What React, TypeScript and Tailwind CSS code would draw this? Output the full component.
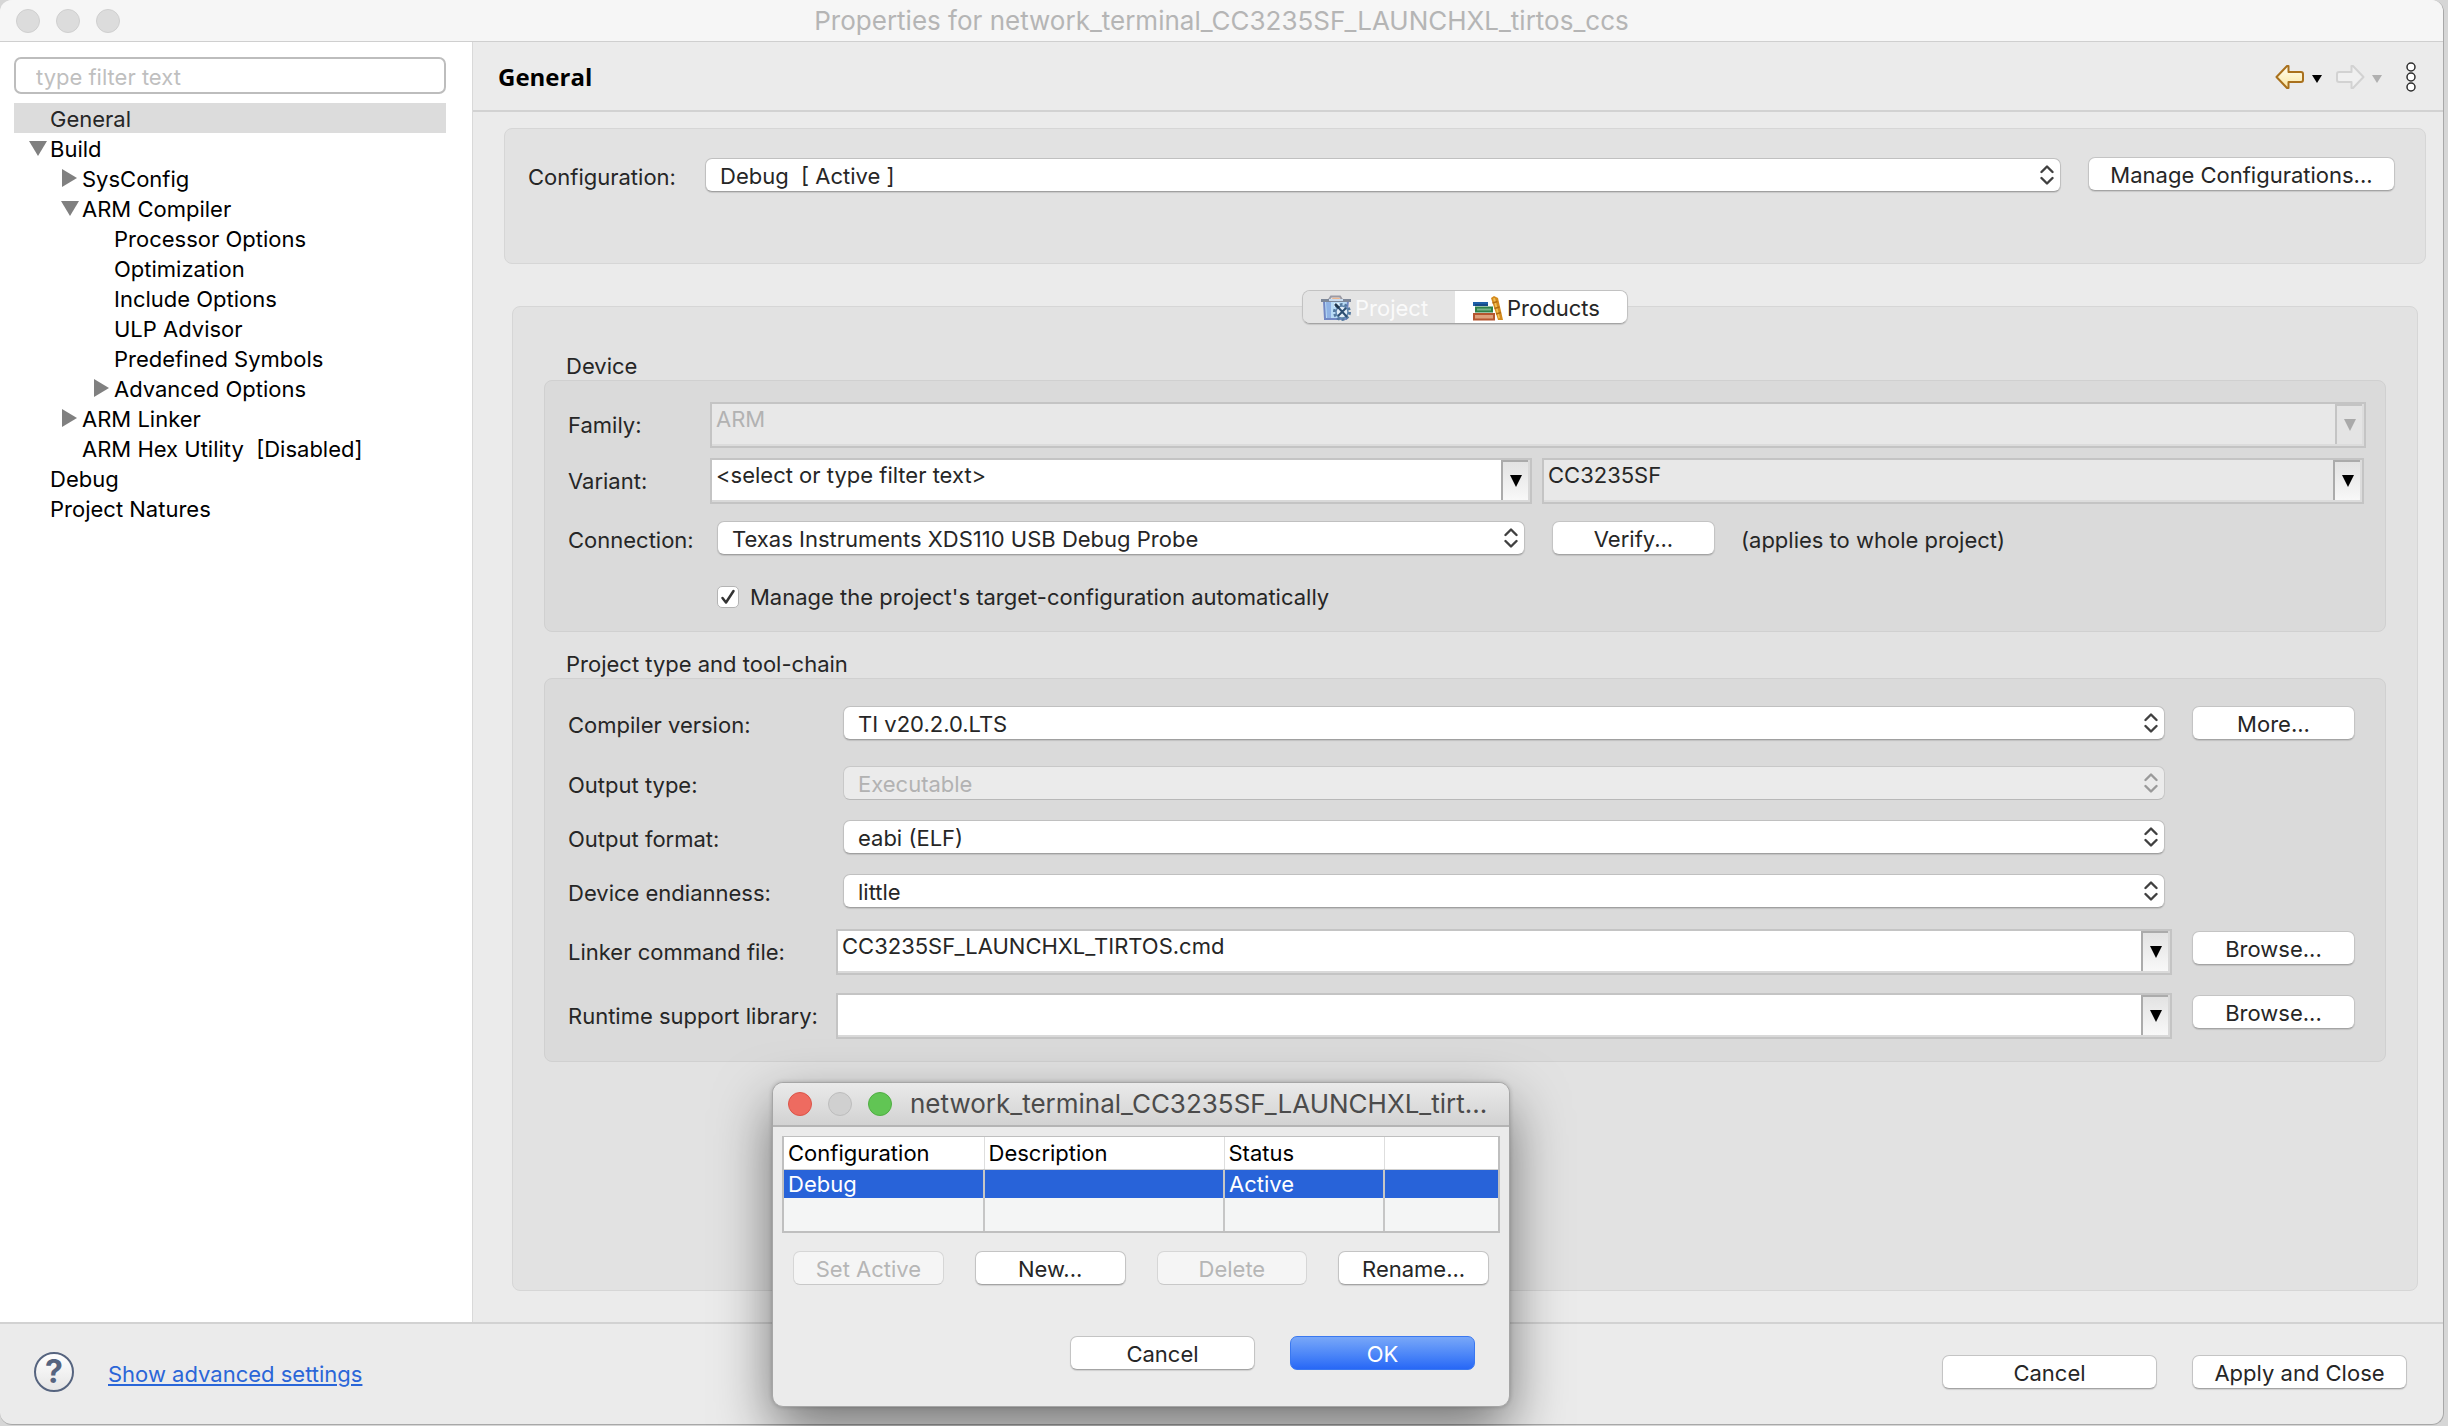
import { useState } from 'react'
import type { ReactNode } from 'react'
import clsx from 'clsx'

type TreeItem = {
  label: string
  depth: 0 | 1 | 2
  arrow?: 'open' | 'closed'
}

const tree: TreeItem[] = [
  { label: 'General', depth: 0 },
  { label: 'Build', depth: 0, arrow: 'open' },
  { label: 'SysConfig', depth: 1, arrow: 'closed' },
  { label: 'ARM Compiler', depth: 1, arrow: 'open' },
  { label: 'Processor Options', depth: 2 },
  { label: 'Optimization', depth: 2 },
  { label: 'Include Options', depth: 2 },
  { label: 'ULP Advisor', depth: 2 },
  { label: 'Predefined Symbols', depth: 2 },
  { label: 'Advanced Options', depth: 2, arrow: 'closed' },
  { label: 'ARM Linker', depth: 1, arrow: 'closed' },
  { label: 'ARM Hex Utility\u00a0 [Disabled]', depth: 1 },
  { label: 'Debug', depth: 0 },
  { label: 'Project Natures', depth: 0 },
]

const indent = { 0: 'pl-[14px]', 1: 'pl-[46px]', 2: 'pl-[78px]' }

function TreeArrow({ kind }: { kind?: 'open' | 'closed' }) {
  return (
    <span className="flex w-[22px] shrink-0 items-center">
      {kind === 'open' && (
        <svg width="18" height="15" viewBox="0 0 18 15" className="ml-px">
          <path d="M0 0h18L9 15z" fill="#808080" />
        </svg>
      )}
      {kind === 'closed' && (
        <svg width="15" height="18" viewBox="0 0 15 18" className="ml-[2px]">
          <path d="M0 0v18l15-9z" fill="#808080" />
        </svg>
      )}
    </span>
  )
}

type ButtonProps = {
  children: ReactNode
  className?: string
  disabled?: boolean
  primary?: boolean
}

function PushButton({ children, className, disabled, primary }: ButtonProps) {
  return (
    <button
      type="button"
      disabled={disabled}
      className={clsx(
        'flex h-[34px] shrink-0 items-center justify-center rounded-[7px] border pt-[2px] whitespace-nowrap',
        primary && 'border-[#3a78f0] bg-linear-to-b from-[#78a7f8] to-[#2767f6] text-white',
        disabled && 'border-[#d6d6d6] border-b-[#c8c8c8] bg-[#f5f5f5] text-[#b6b6b6]',
        !primary && !disabled && 'border-[#c4c4c4] border-b-[#a4a4a4] bg-white text-[#262626] shadow-[0_1px_1px_rgba(0,0,0,0.12)]',
        className
      )}
    >
      {children}
    </button>
  )
}

type PopUpProps = { id: string; value: string; className?: string; disabled?: boolean }

function PopUp({ id, value, className, disabled }: PopUpProps) {
  return (
    <div className={clsx('relative h-[34px]', className)}>
      <select
        id={id}
        disabled={disabled}
        className={clsx(
          'h-full w-full appearance-none rounded-[7px] border pt-[2px] pl-[14px] opacity-100',
          disabled
            ? 'border-[#c8c8c8] border-b-[#b8b8b8] bg-[#ebebeb] text-[#b2b2b2]'
            : 'border-[#c0c0c0] border-b-[#a0a0a0] bg-white text-[#262626] shadow-[0_1px_1px_rgba(0,0,0,0.12)]'
        )}
      >
        <option>{value}</option>
      </select>
      <svg
        width="14"
        height="20"
        viewBox="0 0 14 20"
        fill="none"
        stroke={disabled ? '#9a9a9a' : '#404040'}
        strokeWidth="2.4"
        strokeLinecap="round"
        strokeLinejoin="round"
        className="pointer-events-none absolute top-[7px] right-[7px]"
      >
        <path d="M1.500 7 7 1.500 12.500 7M1.500 13 7 18.500 12.500 13" />
      </svg>
    </div>
  )
}

type ComboProps = {
  id: string
  value: string
  label?: string
  className?: string
  tone?: 'white' | 'grey' | 'disabled'
}

// text field with a drop-down arrow at the right edge
function Combo({ id, value, label, className, tone = 'white' }: ComboProps) {
  const off = tone === 'disabled'
  return (
    <div
      className={clsx(
        'flex h-[46px] min-w-0 border-2 border-[#c4c4c4] pr-[2px] pb-[2px]',
        tone === 'white' ? 'bg-[#d9d9d9]' : 'bg-[#dcdcdc]',
        className
      )}
    >
      <input
        id={id}
        type="text"
        defaultValue={value}
        disabled={off}
        aria-label={label}
        className={clsx(
          'min-w-0 flex-1 pb-[10px] pl-[4px] outline-none',
          tone === 'white' ? 'bg-white' : 'bg-[#e8e8e8]',
          off ? 'text-[#b2b2b2]' : 'text-[#262626]'
        )}
      />
      <button
        type="button"
        disabled={off}
        aria-label="Show choices"
        className={clsx(
          'flex w-[27px] items-center justify-center border-t-2 border-l-2',
          off ? 'border-[#c4c4c4] bg-[#e4e4e4]' : 'border-[#ababab] bg-linear-to-b from-[#e3e3e3] to-[#f8f8f8]'
        )}
      >
        <svg width="12" height="12" viewBox="0 0 12 12">
          <path d="M0 0h12L6 12z" fill={off ? '#a9a9a9' : '#000'} />
        </svg>
      </button>
    </div>
  )
}

function ProjectIcon() {
  return (
    <svg width="30" height="26" viewBox="0 0 30 26">
      <path d="M8 4.500 10 1.500h9l2 3" fill="none" stroke="#9a9aa4" strokeWidth="2" />
      <path d="M10 4.500 12 2.800h6l2 1.700z" fill="#efb78f" />
      <path d="M3 6h24l-2 18H4z" fill="#b9dbf5" stroke="#7288c4" strokeWidth="2" />
      <path d="M5 7h5v16H6z" fill="#8fb2e4" />
      <path d="M0 4h30v3H0z" fill="#7d8798" />
      <path d="M8 4h14v2H8z" fill="#c9dbee" />
      <path d="M13 8h8v4h-8z" fill="#e2f4ff" />
      <circle cx="21" cy="17" r="7.500" fill="none" stroke="#54799f" strokeWidth="3" strokeDasharray="2.700 2" />
      <circle cx="21" cy="17" r="6" fill="#e3eef8" stroke="#5f86ae" strokeWidth="1.500" />
      <path d="m16 11 10 11M25 13l-8 8" stroke="#2e4f72" strokeWidth="2" />
      <path d="m14 9 4 4" stroke="#22384f" strokeWidth="2.500" />
    </svg>
  )
}

function BooksIcon() {
  return (
    <svg width="30" height="25" viewBox="0 0 30 25">
      <path d="M0 6h15v4H0z" fill="#1d5fa8" />
      <path d="M2 8h13v2H2z" fill="#174a86" />
      <path d="M2 10.500h18v6H2z" fill="#2f8148" />
      <path d="M4 12.500h14v2H4z" fill="#79b489" />
      <path d="M0 17h22v7.500H0z" fill="#b5552f" />
      <path d="M2 19h18v3.500H2z" fill="#dda07a" />
      <path d="M18 2l3-2 4 2 5 22h-5z" fill="#d48a1c" />
      <path d="m20 2.500 2-.5 5 20-1.500.500z" fill="#f1bf55" />
      <path d="m19.500 7 5-1.500M21.500 12.500l5-1.500M23 18l5-1.500" stroke="#b36c10" strokeWidth="1.500" />
    </svg>
  )
}

function HistoryButtons() {
  return (
    <div className="flex items-center pt-[2px]">
      <button type="button" aria-label="Back">
        <svg width="30" height="26" viewBox="0 0 30 26">
          <defs>
            <linearGradient id="back" x1="0" y1="0" x2="0" y2="1">
              <stop offset="0" stopColor="#fffef2" />
              <stop offset="1" stopColor="#fbe6a0" />
            </linearGradient>
          </defs>
          <path
            d="M1.500 13 12 2h1.500v6H26q2 0 2 2v6q0 2-2 2H13.500v6H12z"
            fill="url(#back)"
            stroke="#a9701c"
            strokeWidth="2"
            strokeLinejoin="round"
          />
        </svg>
      </button>
      <button type="button" aria-label="Back history" className="ml-[7px] pt-[3px]">
        <svg width="10" height="8" viewBox="0 0 10 8">
          <path d="M0 0h10L5 8z" fill="#000" />
        </svg>
      </button>
      <button type="button" aria-label="Forward" disabled className="ml-[13px]">
        <svg width="30" height="26" viewBox="0 0 30 26">
          <path
            d="M28.500 13 18 2h-1.500v6H4q-2 0-2 2v6q0 2 2 2h12.500v6H18z"
            fill="#f0f0f0"
            stroke="#d2d2d2"
            strokeWidth="2"
            strokeLinejoin="round"
          />
        </svg>
      </button>
      <button type="button" aria-label="Forward history" disabled className="ml-[7px] pt-[3px]">
        <svg width="10" height="8" viewBox="0 0 10 8">
          <path d="M0 0h10L5 8z" fill="#b0b0b0" />
        </svg>
      </button>
      <button type="button" aria-label="View menu" className="ml-[23px]">
        <svg width="12" height="30" viewBox="0 0 12 30" fill="#fff" stroke="#2d2d2d" strokeWidth="1.500">
          <circle cx="6" cy="5" r="4" />
          <circle cx="6" cy="15" r="4" />
          <circle cx="6" cy="25" r="4" />
        </svg>
      </button>
    </div>
  )
}

function Sidebar() {
  const [selected, setSelected] = useState('General')

  return (
    <aside className="w-[473px] shrink-0 border-r border-[#d9d9d9] bg-white pt-[15px] pr-[26px] pl-[14px] text-black">
      <input
        type="text"
        aria-label="Filter"
        placeholder="type filter text"
        className="h-[37px] w-full rounded-[7px] border-2 border-[#bdbdbd] bg-white pt-[2px] pl-[20px] outline-none placeholder:text-[#bfbfbf]"
      />
      <ul className="mt-[9px]">
        {tree.map(({ label, depth, arrow }) => (
          <li key={label}>
            <button
              type="button"
              onClick={() => setSelected(label)}
              className={clsx(
                'flex h-[30px] w-full items-center text-left whitespace-nowrap',
                indent[depth],
                selected === label && 'bg-[#dcdcdc] text-[#262626]'
              )}
            >
              <TreeArrow kind={arrow} />
              <span className="pt-[2px]">{label}</span>
            </button>
          </li>
        ))}
      </ul>
    </aside>
  )
}

function DeviceGroup() {
  return (
    <fieldset>
      <legend className="pl-[22px] leading-[28px]">Device</legend>
      <div className="rounded-[8px] border border-[#d0d0d0] bg-[#dadada] pt-[21px] pr-[19px] pb-[19px] pl-[23px]">
        <div className="grid grid-cols-[142px_1fr] items-center">
          <label htmlFor="family">Family:</label>
          <Combo id="family" value="ARM" tone="disabled" />
        </div>
        <div className="mt-[10px] grid grid-cols-[142px_1fr] items-center">
          <label htmlFor="variant">Variant:</label>
          <div className="flex gap-[10px] pr-[2px]">
            <Combo id="variant" value="<select or type filter text>" className="flex-1" />
            <Combo id="variant-device" label="Device variant" value="CC3235SF" tone="grey" className="flex-1" />
          </div>
        </div>
        <div className="mt-[17px] grid grid-cols-[142px_1fr] items-center">
          <label htmlFor="connection" className="pt-1">Connection:</label>
          <div className="grid grid-cols-2 gap-[10px] pr-[2px]">
            <PopUp id="connection" value="Texas Instruments XDS110 USB Debug Probe" className="mx-[7px]" />
            <div className="flex items-center pl-[10px]">
              <PushButton className="w-[163px]">Verify...</PushButton>
              <span className="pt-1 pl-[26px]">(applies to whole project)</span>
            </div>
          </div>
        </div>
        <label className="mt-[27px] flex h-[30px] items-center pl-[149px]">
          <span className="relative h-[22px] w-[22px]">
            <input
              type="checkbox"
              defaultChecked
              className="peer block h-[22px] w-[22px] appearance-none rounded-[5px] border border-[#b4b4b4] bg-white"
            />
            <svg
              width="16"
              height="16"
              viewBox="0 0 16 16"
              className="pointer-events-none invisible absolute top-[3px] left-[3px] peer-checked:visible"
            >
              <path d="M2.500 9 6 13.500 13.500 2" fill="none" stroke="#333" strokeWidth="2.500" strokeLinecap="round" strokeLinejoin="round" />
            </svg>
          </span>
          <span className="pl-[11px]">Manage the project's target-configuration automatically</span>
        </label>
      </div>
    </fieldset>
  )
}

type RowProps = { id: string; label: string; className: string; action?: string; combo?: boolean; children: ReactNode }

function ToolRow({ id, label, className, action, combo, children }: RowProps) {
  return (
    <div className={clsx('grid grid-cols-[268px_1fr_163px]', className)}>
      <label htmlFor={id} className={clsx('self-center whitespace-nowrap', !combo && 'pt-1')}>
        {label}
      </label>
      <div className={clsx('mr-[20px]', !combo && 'px-[7px]')}>{children}</div>
      {action && <PushButton className={combo ? 'mt-[2px]' : ''}>{action}</PushButton>}
    </div>
  )
}

function ToolchainGroup() {
  return (
    <fieldset className="mt-[18px]">
      <legend className="pl-[22px] leading-[28px]">Project type and tool-chain</legend>
      <div className="rounded-[8px] border border-[#d0d0d0] bg-[#dadada] pt-[27px] pr-[30px] pb-[22px] pl-[23px]">
        <ToolRow id="compiler" label="Compiler version:" className="" action="More...">
          <PopUp id="compiler" value="TI v20.2.0.LTS" />
        </ToolRow>
        <ToolRow id="output-type" label="Output type:" className="mt-[26px]">
          <PopUp id="output-type" value="Executable" disabled />
        </ToolRow>
        <ToolRow id="output-format" label="Output format:" className="mt-[20px]">
          <PopUp id="output-format" value="eabi (ELF)" />
        </ToolRow>
        <ToolRow id="endianness" label="Device endianness:" className="mt-[20px]">
          <PopUp id="endianness" value="little" />
        </ToolRow>
        <ToolRow id="linker" label="Linker command file:" className="mt-[21px]" action="Browse..." combo>
          <Combo id="linker" value="CC3235SF_LAUNCHXL_TIRTOS.cmd" />
        </ToolRow>
        <ToolRow id="runtime" label="Runtime support library:" className="mt-[18px]" action="Browse..." combo>
          <Combo id="runtime" value="" />
        </ToolRow>
      </div>
    </fieldset>
  )
}

function ConfigurationsDialog() {
  return (
    <div
      role="dialog"
      aria-labelledby="dialog-title"
      className="absolute bottom-[19px] left-[772px] w-[738px] rounded-[11px] border border-[#a6a6a6] bg-[#ebebeb] pb-[36px] shadow-[0_24px_56px_rgba(0,0,0,0.5),0_0_4px_rgba(0,0,0,0.2)]"
    >
      <div className="flex h-[44px] items-center gap-[16px] rounded-t-[10px] border-b-2 border-[#b4b4b4] bg-linear-to-b from-[#eaeaea] to-[#d2d2d2] pl-[15px]">
        <button type="button" aria-label="Close" className="h-[24px] w-[24px] rounded-full border border-[#dc5448] bg-[#ee6b60]" />
        <button type="button" aria-label="Minimize" className="h-[24px] w-[24px] rounded-full border border-[#bdbdbd] bg-[#d0d0d0]" />
        <button type="button" aria-label="Zoom" className="h-[24px] w-[24px] rounded-full border border-[#4fae42] bg-[#61c554]" />
        <h2 id="dialog-title" className="pl-[2px] text-[26px] whitespace-nowrap text-[#4b4b4b]">
          network_terminal_CC3235SF_LAUNCHXL_tirt...
        </h2>
      </div>

      <div className="mx-[9px] mt-[9px] border-2 border-t border-[#bfbfbf] bg-white">
        <table className="w-full table-fixed border-collapse text-left text-black">
          <colgroup>
            <col className="w-[200px]" />
            <col className="w-[240px]" />
            <col className="w-[160px]" />
            <col />
          </colgroup>
          <thead>
            <tr className="h-[32px] border-b border-[#cfcfcf]">
              <th className="border-r border-[#dedede] p-0 pl-[4px] font-normal">Configuration</th>
              <th className="border-r border-[#dedede] p-0 pl-[4px] font-normal">Description</th>
              <th className="border-r border-[#dedede] p-0 pl-[4px] font-normal">Status</th>
              <th className="p-0" />
            </tr>
          </thead>
          <tbody>
            <tr className="h-[29px] bg-[#2863d9] text-white">
              <td className="border-r-2 border-[#c6c6c6] p-0 pl-[4px] leading-[28px]">Debug</td>
              <td className="border-r-2 border-[#c6c6c6] p-0" />
              <td className="border-r-2 border-[#c6c6c6] p-0 pl-[4px] leading-[28px]">Active</td>
              <td className="p-0" />
            </tr>
            <tr className="h-[33px] bg-[#f4f5f5]">
              <td className="border-r-2 border-[#c6c6c6] p-0" />
              <td className="border-r-2 border-[#c6c6c6] p-0" />
              <td className="border-r-2 border-[#c6c6c6] p-0" />
              <td className="p-0" />
            </tr>
          </tbody>
        </table>
      </div>

      <div className="mt-[18px] grid grid-cols-4 gap-[31px] px-[20px]">
        <PushButton disabled>Set Active</PushButton>
        <PushButton>New...</PushButton>
        <PushButton disabled>Delete</PushButton>
        <PushButton>Rename...</PushButton>
      </div>
      <div className="mt-[51px] flex justify-end gap-[35px] pr-[34px]">
        <PushButton className="w-[185px]">Cancel</PushButton>
        <PushButton className="w-[185px]" primary>OK</PushButton>
      </div>
    </div>
  )
}

export default function App() {
  return (
    <div className="relative flex min-h-screen flex-col bg-[#d6d6d6] pr-[4px] pb-px font-['Inter','Liberation_Sans',sans-serif] text-[22px] leading-[28px] text-[#262626]">
      <div className="flex flex-1 flex-col overflow-hidden rounded-[12px] border-r border-b border-[#a8a8a8] bg-[#ebebeb]">
        {/* title bar */}
        <header className="grid h-[42px] grid-cols-[1fr_auto_1fr] items-center border-b border-[#cfcfcf] bg-[#f6f6f6]">
          <div className="flex gap-[16px] pl-[16px]">
            <button type="button" aria-label="Close" className="h-[24px] w-[24px] rounded-full border border-[#cfcfcf] bg-[#dcdcdc]" />
            <button type="button" aria-label="Minimize" className="h-[24px] w-[24px] rounded-full border border-[#cfcfcf] bg-[#dcdcdc]" />
            <button type="button" aria-label="Zoom" className="h-[24px] w-[24px] rounded-full border border-[#cfcfcf] bg-[#dcdcdc]" />
          </div>
          <h1 className="text-[26px] text-[#b5b5b5]">Properties for network_terminal_CC3235SF_LAUNCHXL_tirtos_ccs</h1>
        </header>

        <div className="flex flex-1">
          <Sidebar />

          <main className="flex min-w-0 flex-1 flex-col">
            <div className="flex h-[70px] items-center justify-between border-b-2 border-[#d2d2d2] pr-[26px] pl-[25px]">
              <h2 className="pt-[2px] font-['Open_Sans','Noto_Sans',sans-serif] text-[24px] font-bold text-black">General</h2>
              <HistoryButtons />
            </div>

            <section className="mt-[16px] mr-[17px] ml-[31px] flex h-[136px] items-start rounded-[8px] border border-[#d6d6d6] bg-[#e2e2e2] pt-[28px] pr-[30px] pl-[23px]">
              <label htmlFor="configuration" className="w-[177px] pt-[6px]">Configuration:</label>
              <PopUp id="configuration" value={'Debug\u00a0 [ Active ]'} className="mt-px flex-1" />
              <PushButton className="ml-[27px] w-[307px]">Manage Configurations...</PushButton>
            </section>

            <section className="mt-[42px] mr-[25px] mb-[31px] ml-[39px] flex-1 rounded-[8px] border border-[#d6d6d6] bg-[#e2e2e2] px-[31px]">
              <div className="-mt-[17px] flex justify-center">
                <div role="tablist" className="flex h-[34px] w-[326px] overflow-hidden rounded-[8px] border border-[#c2c2c2] border-b-[#a4a4a4] shadow-[0_1px_1px_rgba(0,0,0,0.12)]">
                  <button type="button" role="tab" aria-selected="true" className="flex w-[152px] items-center gap-[4px] bg-[#e4e4e4] pt-[2px] pl-[18px] text-[#fafafa]">
                    <ProjectIcon />
                    Project
                  </button>
                  <button type="button" role="tab" aria-selected="false" className="flex flex-1 items-center gap-[4px] bg-white pt-[2px] pl-[18px]">
                    <BooksIcon />
                    Products
                  </button>
                </div>
              </div>
              <div className="mt-[28px]">
                <DeviceGroup />
                <ToolchainGroup />
              </div>
            </section>
          </main>
        </div>

        <footer className="flex h-[102px] items-center border-t-2 border-[#d2d2d2] pr-[36px] pb-[4px] pl-[34px]">
          <button
            type="button"
            aria-label="Help"
            className="flex h-[40px] w-[40px] items-center justify-center rounded-full border-2 border-[#56647f] bg-linear-to-b from-white to-[#e6e6e6] text-[32px] leading-[32px] font-bold text-[#56647f]"
          >
            ?
          </button>
          <a href="#advanced" className="ml-[34px] pt-[4px] text-[#2a66d8] underline decoration-2 underline-offset-2">
            Show advanced settings
          </a>
          <div className="ml-auto flex gap-[35px]">
            <PushButton className="w-[215px]">Cancel</PushButton>
            <PushButton className="w-[215px]">Apply and Close</PushButton>
          </div>
        </footer>
      </div>

      <ConfigurationsDialog />
    </div>
  )
}
